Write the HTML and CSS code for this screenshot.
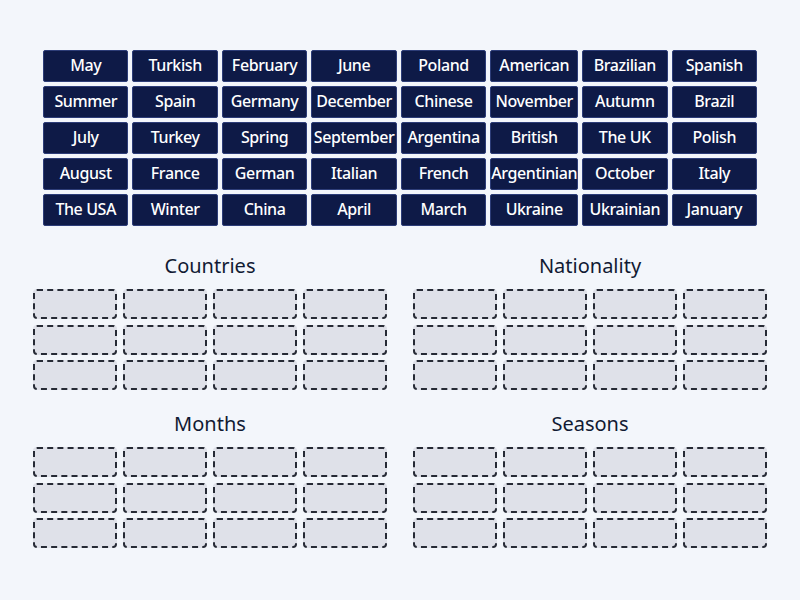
FILE: index.html
```html
<!DOCTYPE html>
<html>
<head>
<meta charset="utf-8">
<link rel="stylesheet" href="styles.css">
</head>
<body>
<div class="tiles">
  <div class="tile">May</div><div class="tile">Turkish</div><div class="tile">February</div><div class="tile">June</div><div class="tile">Poland</div><div class="tile">American</div><div class="tile">Brazilian</div><div class="tile">Spanish</div>
  <div class="tile">Summer</div><div class="tile">Spain</div><div class="tile">Germany</div><div class="tile">December</div><div class="tile">Chinese</div><div class="tile">November</div><div class="tile">Autumn</div><div class="tile">Brazil</div>
  <div class="tile">July</div><div class="tile">Turkey</div><div class="tile">Spring</div><div class="tile">September</div><div class="tile">Argentina</div><div class="tile">British</div><div class="tile">The UK</div><div class="tile">Polish</div>
  <div class="tile">August</div><div class="tile">France</div><div class="tile">German</div><div class="tile">Italian</div><div class="tile">French</div><div class="tile">Argentinian</div><div class="tile">October</div><div class="tile">Italy</div>
  <div class="tile">The USA</div><div class="tile">Winter</div><div class="tile">China</div><div class="tile">April</div><div class="tile">March</div><div class="tile">Ukraine</div><div class="tile">Ukrainian</div><div class="tile">January</div>
</div>
<div class="groups">
  <div class="group">
    <div class="heading">Countries</div>
    <div class="zones">
      <div class="zone"></div><div class="zone"></div><div class="zone"></div><div class="zone"></div>
      <div class="zone"></div><div class="zone"></div><div class="zone"></div><div class="zone"></div>
      <div class="zone"></div><div class="zone"></div><div class="zone"></div><div class="zone"></div>
    </div>
  </div>
  <div class="group">
    <div class="heading">Nationality</div>
    <div class="zones">
      <div class="zone"></div><div class="zone"></div><div class="zone"></div><div class="zone"></div>
      <div class="zone"></div><div class="zone"></div><div class="zone"></div><div class="zone"></div>
      <div class="zone"></div><div class="zone"></div><div class="zone"></div><div class="zone"></div>
    </div>
  </div>
  <div class="group">
    <div class="heading">Months</div>
    <div class="zones">
      <div class="zone"></div><div class="zone"></div><div class="zone"></div><div class="zone"></div>
      <div class="zone"></div><div class="zone"></div><div class="zone"></div><div class="zone"></div>
      <div class="zone"></div><div class="zone"></div><div class="zone"></div><div class="zone"></div>
    </div>
  </div>
  <div class="group">
    <div class="heading">Seasons</div>
    <div class="zones">
      <div class="zone"></div><div class="zone"></div><div class="zone"></div><div class="zone"></div>
      <div class="zone"></div><div class="zone"></div><div class="zone"></div><div class="zone"></div>
      <div class="zone"></div><div class="zone"></div><div class="zone"></div><div class="zone"></div>
    </div>
  </div>
</div>
</body>
</html>
```

FILE: styles.css
```css
html, body {
  margin: 0;
  padding: 0;
  background: #f3f6fb;
  font-family: "Noto Sans", "Open Sans", sans-serif;
}
body {
  width: 800px;
  height: 600px;
  overflow: hidden;
  padding-top: 50px;
  box-sizing: border-box;
}
.tiles {
  margin: 0 43px;
  display: grid;
  grid-template-columns: repeat(8, 1fr);
  column-gap: 4px;
  row-gap: 4px;
}
.tile {
  height: 32px;
  box-sizing: border-box;
  padding-bottom: 2px;
  background: #0e1a47;
  border: 1px solid #2d3d78;
  border-radius: 2px;
  color: #ffffff;
  font-size: 16px;
  font-weight: 500;
  display: flex;
  align-items: center;
  justify-content: center;
  white-space: nowrap;
  letter-spacing: -0.4px;
}
.groups {
  margin: 28px 33px 0;
  display: grid;
  grid-template-columns: 1fr 1fr;
  column-gap: 26px;
  row-gap: 22px;
}
.heading {
  height: 24px;
  line-height: 24px;
  text-align: center;
  font-size: 20px;
  color: #111a33;
  margin-bottom: 11px;
}
.zones {
  display: grid;
  grid-template-columns: repeat(4, 1fr);
  column-gap: 6px;
  row-gap: 5.5px;
}
.zone {
  height: 30px;
  box-sizing: border-box;
  background: #dfe1e9;
  border: 2px dashed #262a35;
  border-radius: 4px;
}
```
